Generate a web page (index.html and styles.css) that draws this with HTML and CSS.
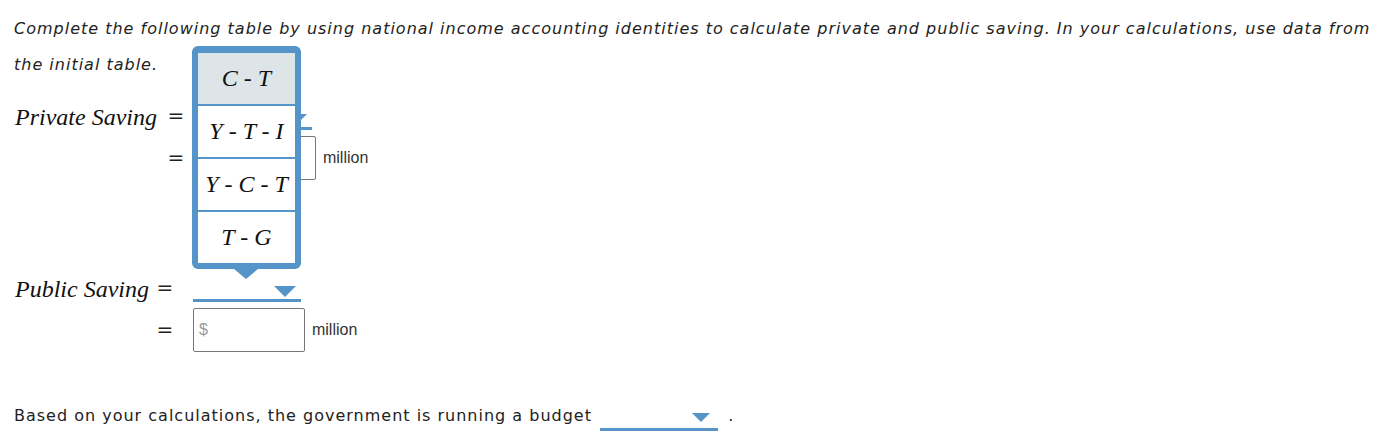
FILE: index.html
```html
<!DOCTYPE html>
<html>
<head>
<meta charset="utf-8">
<link rel="stylesheet" href="styles.css">
</head>
<body>
<div class="page">
  <p class="intro">Complete the following table by using national income accounting identities to calculate private and public saving. In your calculations, use data from<br>the initial table.</p>

  <div class="eq eq-private">
    <span class="lbl">Private Saving</span>
    <span class="eqs">=</span>
    <div class="sel"><svg class="tri" width="22" height="11" viewBox="0 0 22 11"><polygon points="0,0 22,0 11,11"/></svg></div>
    <span></span>
    <span class="eqs eqs-mid">=</span>
    <div class="field"><div class="inp"></div><span class="unit">million</span></div>
  </div>

  <div class="eq eq-public">
    <span class="lbl">Public Saving</span>
    <span class="eqs">=</span>
    <div class="sel">
      <svg class="tri" width="22" height="11" viewBox="0 0 22 11"><polygon points="0,0 22,0 11,11"/></svg>
      <ul class="menu">
        <li class="opt active">C - T</li>
        <li class="opt">Y - T - I</li>
        <li class="opt">Y - C - T</li>
        <li class="opt">T - G</li>
      </ul>
    </div>
    <span></span>
    <span class="eqs eqs-mid">=</span>
    <div class="field"><div class="inp"><span class="dollar">$</span></div><span class="unit">million</span></div>
  </div>

  <p class="budget">Based on your calculations, the government is running a budget <span class="sel sel-inline"><svg class="tri tri-sm" width="18" height="9" viewBox="0 0 18 9"><polygon points="0,0 18,0 9,9"/></svg></span> <span class="dot">.</span></p>
</div>
</body>
</html>
```

FILE: styles.css
```css
html, body {
  margin: 0;
  padding: 0;
  background: #ffffff;
}

.page {
  padding: 11px 0 0 14px;
  color: #222222;
  font-family: "DejaVu Sans", Verdana, sans-serif;
}

.intro {
  margin: 0;
  font-size: 16px;
  line-height: 36px;
  font-style: italic;
  letter-spacing: 1px;
  white-space: nowrap;
}

.eq {
  display: grid;
  grid-template-columns: auto auto auto;
  grid-template-rows: 32px 44px;
  row-gap: 6px;
  justify-content: start;
  align-items: center;
}

.eq-private {
  margin-top: 15px;
  padding-left: 1px;
}

.eq-public {
  margin-top: 90px;
  padding-left: 1px;
}

.lbl {
  font-family: "Liberation Serif", "Times New Roman", serif;
  font-style: italic;
  font-size: 24px;
  line-height: 24px;
  color: #111111;
  align-self: end;
  margin-bottom: 1px;
  margin-right: 10px;
  white-space: nowrap;
}

.eq-public .lbl {
  margin-right: 7px;
}

.eqs {
  font-family: "DejaVu Serif", serif;
  font-size: 20px;
  line-height: 24px;
  color: #222222;
  width: 18px;
  text-align: center;
  margin-right: 19px;
  align-self: end;
  margin-bottom: 2px;
}

.eqs-mid {
  align-self: center;
  margin-bottom: 0;
}

.sel {
  position: relative;
  width: 108px;
  height: 29px;
  border-bottom: 3px solid #5494c8;
  display: flex;
  justify-content: flex-end;
  align-items: flex-end;
  box-sizing: content-box;
}

.tri {
  display: block;
  fill: #5494c8;
  margin: 0 5px 2px 0;
}

.field {
  display: flex;
  align-items: center;
  gap: 7px;
}

.inp {
  width: 112px;
  height: 44px;
  border: 1px solid #777777;
  border-radius: 2px;
  display: flex;
  align-items: center;
  padding-left: 5px;
  box-sizing: border-box;
}

.dollar {
  font-family: "Liberation Sans", Arial, sans-serif;
  font-size: 16px;
  color: #9a9a9a;
}

.unit {
  font-family: "Liberation Sans", Arial, sans-serif;
  font-size: 16px;
  color: #333333;
}

.menu {
  position: absolute;
  left: -1px;
  bottom: calc(100% + 1px);
  width: 109px;
  margin: 0;
  padding: 0;
  list-style: none;
  border: 6px solid #5494c8;
  border-top-width: 7px;
  border-radius: 6px;
  background: #5494c8;
  box-sizing: border-box;
  display: flex;
  flex-direction: column;
  gap: 2px;
}

.menu::after {
  content: "";
  position: absolute;
  left: 50%;
  bottom: -16px;
  margin-left: -12px;
  border-left: 12px solid transparent;
  border-right: 12px solid transparent;
  border-top: 10px solid #5494c8;
}

.opt {
  height: 51px;
  background: #ffffff;
  display: flex;
  align-items: center;
  justify-content: center;
  font-family: "Liberation Serif", "Times New Roman", serif;
  font-style: italic;
  font-size: 24px;
  color: #111111;
  white-space: pre;
}

.opt.active {
  background: #dde5e9;
}

.budget {
  margin: 46px 0 0 0;
  font-size: 16px;
  line-height: 36px;
  letter-spacing: 1px;
  white-space: nowrap;
}

.sel-inline {
  display: inline-flex;
  width: 118px;
  height: 22px;
  vertical-align: -1px;
  margin-left: 2px;
  letter-spacing: 0;
}

.tri-sm {
  margin: 0 8px 6px 0;
}

.dot {
  margin-left: 4px;
}
```
